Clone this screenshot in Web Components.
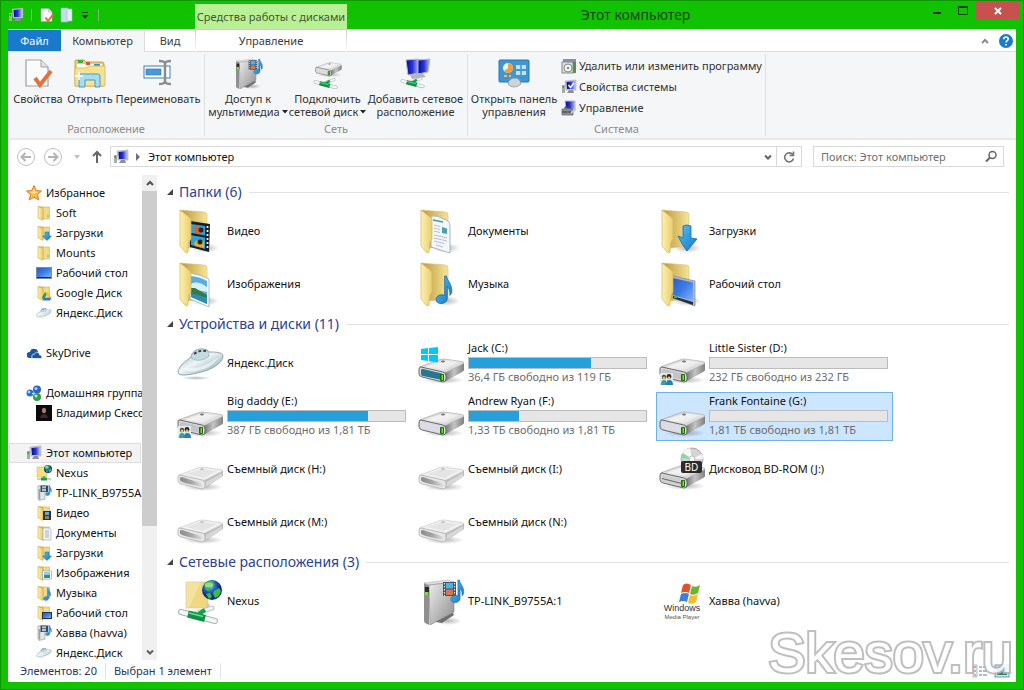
<!DOCTYPE html>
<html lang="ru">
<head>
<meta charset="utf-8">
<title>Этот компьютер</title>
<style>
  html, body { margin: 0; height: 100%; }
  body { font: 11px/16px "Noto Sans", "Open Sans", sans-serif; color: #111; background: #10c200; }
</style>
</head>
<body>
<explorer-window>
  <title-bar slot="title" context="Средства работы с дисками">Этот компьютер</title-bar>
  <ribbon-tabs slot="tabs"></ribbon-tabs>
  <ribbon-bar slot="ribbon">
    <ribbon-group label="Расположение">
      <ribbon-button icon="props" style="--w:54px">Свойства</ribbon-button>
      <ribbon-button icon="open" style="--w:50px">Открыть</ribbon-button>
      <ribbon-button icon="rename" style="--w:86px">Переименовать</ribbon-button>
    </ribbon-group>
    <ribbon-group label="Сеть">
      <ribbon-button icon="nas" style="--w:80px" menu>Доступ к<br>мультимедиа</ribbon-button>
      <ribbon-button icon="netdrive" style="--w:79px" menu>Подключить<br>сетевой диск</ribbon-button>
      <ribbon-button icon="netplace" style="--w:97px">Добавить сетевое<br>расположение</ribbon-button>
    </ribbon-group>
    <ribbon-group label="Система">
      <ribbon-button icon="panel" style="--w:86px">Открыть панель<br>управления</ribbon-button>
      <ribbon-list>
        <ribbon-item icon="uninstall">Удалить или изменить программу</ribbon-item>
        <ribbon-item icon="sysprops">Свойства системы</ribbon-item>
        <ribbon-item icon="manage">Управление</ribbon-item>
      </ribbon-list>
    </ribbon-group>
  </ribbon-bar>
  <address-bar slot="address">Этот компьютер</address-bar>
  <nav-pane slot="nav">
    <nav-item root icon="star">Избранное</nav-item>
    <nav-item icon="f16">Soft</nav-item>
    <nav-item icon="f16down">Загрузки</nav-item>
    <nav-item icon="f16">Mounts</nav-item>
    <nav-item icon="desk16">Рабочий стол</nav-item>
    <nav-item icon="f16drive">Google Диск</nav-item>
    <nav-item icon="ufo">Яндекс.Диск</nav-item>
    <nav-item root gap icon="cloud">SkyDrive</nav-item>
    <nav-item root gap icon="home16">Домашняя группа</nav-item>
    <nav-item icon="user16">Владимир Скесов</nav-item>
    <nav-item root gap selected icon="pc">Этот компьютер</nav-item>
    <nav-item icon="nexus16">Nexus</nav-item>
    <nav-item icon="nas16">TP-LINK_B9755A:1</nav-item>
    <nav-item icon="f16video">Видео</nav-item>
    <nav-item icon="f16doc">Документы</nav-item>
    <nav-item icon="f16down">Загрузки</nav-item>
    <nav-item icon="f16pic">Изображения</nav-item>
    <nav-item icon="f16music">Музыка</nav-item>
    <nav-item icon="f16desk">Рабочий стол</nav-item>
    <nav-item icon="nas16">Хавва (havva)</nav-item>
    <nav-item icon="ufo">Яндекс.Диск</nav-item>
  </nav-pane>
  <tile-group label="Папки (6)">
    <file-tile icon="video">Видео</file-tile>
    <file-tile icon="docs">Документы</file-tile>
    <file-tile icon="downloads">Загрузки</file-tile>
    <file-tile icon="pictures">Изображения</file-tile>
    <file-tile icon="music">Музыка</file-tile>
    <file-tile icon="desktop">Рабочий стол</file-tile>
  </tile-group>
  <tile-group label="Устройства и диски (11)">
    <file-tile icon="ufo">Яндекс.Диск</file-tile>
    <drive-tile icon="driveC" used="69" info="36,4 ГБ свободно из 119 ГБ">Jack (C:)</drive-tile>
    <drive-tile icon="driveShared" used="0" info="232 ГБ свободно из 232 ГБ">Little Sister (D:)</drive-tile>
    <drive-tile icon="driveShared" used="79" info="387 ГБ свободно из 1,81 ТБ">Big daddy (E:)</drive-tile>
    <drive-tile icon="drive" used="28" info="1,33 ТБ свободно из 1,81 ТБ">Andrew Ryan (F:)</drive-tile>
    <drive-tile icon="drive" used="0" selected info="1,81 ТБ свободно из 1,81 ТБ">Frank Fontaine (G:)</drive-tile>
    <file-tile icon="removable">Съемный диск (H:)</file-tile>
    <file-tile icon="removable">Съемный диск (I:)</file-tile>
    <file-tile icon="bd">Дисковод BD-ROM (J:)</file-tile>
    <file-tile icon="removable">Съемный диск (M:)</file-tile>
    <file-tile icon="removable">Съемный диск (N:)</file-tile>
  </tile-group>
  <tile-group label="Сетевые расположения (3)">
    <file-tile icon="nexus">Nexus</file-tile>
    <file-tile icon="nas">TP-LINK_B9755A:1</file-tile>
    <file-tile icon="wmp">Хавва (havva)</file-tile>
  </tile-group>
  <status-bar slot="status"></status-bar>
  <water-mark slot="mark">Skesov.ru</water-mark>
</explorer-window>

<script>
/* ---------- shared drawing parts ---------- */
const GRADS = `<defs>
<linearGradient id="gf" x1="0" x2="1"><stop offset="0" stop-color="#fdf0b0"/><stop offset="1" stop-color="#e9cd6c"/></linearGradient>
<linearGradient id="gb" x1="0" x2="1"><stop offset="0" stop-color="#b9964a"/><stop offset=".55" stop-color="#dcc06a"/><stop offset="1" stop-color="#f6e59c"/></linearGradient>
<linearGradient id="gblue" x1="0" x2="1" y2="1"><stop offset="0" stop-color="#5cc0f4"/><stop offset="1" stop-color="#0f78c4"/></linearGradient>
<linearGradient id="gscr" x1="0" x2="1" y2="1"><stop offset="0" stop-color="#2a5cc4"/><stop offset=".5" stop-color="#3f7ce6"/><stop offset="1" stop-color="#7fb4ff"/></linearGradient>
<linearGradient id="gnavy" x1="0" x2="1"><stop offset="0" stop-color="#0208a0"/><stop offset=".5" stop-color="#2a35d0"/><stop offset="1" stop-color="#b4c0fa"/></linearGradient>
<linearGradient id="gtop" x1="0" x2="1" y2="1"><stop offset="0" stop-color="#9c9c9c"/><stop offset=".4" stop-color="#ededed"/><stop offset="1" stop-color="#c6c6c6"/></linearGradient>
<linearGradient id="gside" x1="0" x2="1"><stop offset="0" stop-color="#6c6c6c"/><stop offset=".5" stop-color="#c4c4c4"/><stop offset="1" stop-color="#808080"/></linearGradient>
<linearGradient id="gbox" x1="0" x2="1" y2="1"><stop offset="0" stop-color="#ececec"/><stop offset=".5" stop-color="#bdbdbd"/><stop offset="1" stop-color="#8c8c8c"/></linearGradient>
<linearGradient id="gufo" x1="0" x2="1" y2="1"><stop offset="0" stop-color="#7f9ba3"/><stop offset=".45" stop-color="#eef6f8"/><stop offset="1" stop-color="#7c9ca6"/></linearGradient>
<linearGradient id="ghole" x1="0" x2="1"><stop offset="0" stop-color="#8c8c8c"/><stop offset=".5" stop-color="#a4a4a4"/><stop offset="1" stop-color="#e0e0e0"/></linearGradient>
<radialGradient id="gglobe" cx=".4" cy=".3"><stop offset="0" stop-color="#a8dcff"/><stop offset=".45" stop-color="#2d72d6"/><stop offset="1" stop-color="#0b2c86"/></radialGradient>
<radialGradient id="gsh"><stop offset="0" stop-color="#000" stop-opacity=".28"/><stop offset="1" stop-color="#000" stop-opacity="0"/></radialGradient></defs>`;

const back = '<ellipse cx="28" cy="41" rx="14" ry="5" fill="url(#gsh)"/><path d="M3 3L27 5Q30 5 30 8V39L10 41Z" fill="url(#gb)" stroke="#d8be70" stroke-width=".6"/>';
const flap = '<path d="M3 3L12 10Q14 11 14 13V32L12 35L11 45Q10 47 8 45L3 39Z" fill="url(#gf)" stroke="#d6b95e" stroke-width=".7"/>';
const folder = (inside, front = '') => back + inside + flap + front;
const note = (x, y, s) => `<g transform="translate(${x} ${y}) scale(${s})"><path d="M13 0C14 6 20 9 19 19L17 22C17 15 15 13 14 12V25C14 30 9 32 5 31C1 30 0 26 3 23C5 21 9 21 11 22V0Z" fill="url(#gblue)" stroke="#0f5d9c" stroke-width=".8"/></g>`;

const driveBody = (front, led) => `<ellipse cx="26" cy="41" rx="20" ry="4" fill="url(#gsh)"/>
<path d="M26 33L46 24V31Q46 32 44 33L28 42L26 43Z" fill="url(#gside)"/>
<path d="M2 28Q1 28 4 27L22 20.500Q24 20 26 20L44 22.500Q47 23 45 25L29 33Q27 34 25 34Z" fill="url(#gtop)" stroke="#a4a4a4" stroke-width=".6"/>
<path d="M8 27L24 21.500L40 23.500L26 31Z" fill="#fff" opacity=".35"/><ellipse cx="25" cy="22.500" rx="2" ry=".9" fill="#777"/>
<path d="M1 30Q1 28 3 28L25 33Q28 34 28 37V40Q28 43 25 43L4 38Q1 37 1 35Z" fill="#d8d8d8" stroke="#5c5c5c" stroke-width=".9"/>
<path d="M3 31Q3 30 5 30L24 34.500V41L5 37Q3 37 3 35Z" fill="${front}"/>
${led ? '<rect x="22" y="35" width="4" height="7" rx="1" fill="#1c6a0c"/><rect x="23.500" y="36" width="1.500" height="5" fill="#6be830"/>' : ''}`;
const lightDrive = `<ellipse cx="26" cy="42" rx="20" ry="4" fill="url(#gsh)"/>
<path d="M26 34L46 25V31L28 43L26 43Z" fill="#bcbcbc"/><path d="M28 42L45 32V28L29 37Z" fill="#d8d8d8"/>
<path d="M2 30L22 22.500Q24 22 26 22L43 24.500Q47 25 44 27L29 34.500Q27 36 25 35Z" fill="#f1f1f1" stroke="#cacaca" stroke-width=".7"/>
<path d="M9 29L24 24L40 26L26 33Z" fill="#e4e4e4"/><ellipse cx="25" cy="24" rx="2" ry=".8" fill="#b4b4b4"/>
<path d="M1 32Q1 30 3 30L25 35Q28 35 28 38V41Q28 44 25 44L4 39Q1 38 1 36Z" fill="#e6e6e6" stroke="#b2b2b2" stroke-width=".8"/>
<path d="M3 33Q3 32 5 32L25 38.500V42L12 39Q3 37 3 35Z" fill="url(#ghole)"/>`;
const people = '<rect x="1" y="34" width="13" height="12" fill="#d3eef3"/><path d="M2 46Q2 41 5 41Q8 41 8 46Z" fill="#3f9e90"/><path d="M7 46Q7 41 10 41Q14 41 14 46Z" fill="#2a7fb8"/><circle cx="5" cy="38" r="2.200" fill="#6c3c1c"/><circle cx="10" cy="37.500" r="2.400" fill="#3c2010"/><circle cx="5" cy="39" r="1.400" fill="#e8b690"/><circle cx="10" cy="39" r="1.400" fill="#e8b690"/>';
const globe = (x, y, r) => `<g transform="translate(${x} ${y}) scale(${r / 10})"><circle r="10" fill="url(#gglobe)"/><path d="M-8 -5Q-5 -10 1 -9L3 -5L-1 -3L-3 1L-6 0ZM2 1L7 -2L9 1L7 6L3 8L1 4ZM-6 4L-2 3L0 7L-3 9Z" fill="#3fbb3c"/><ellipse cx="-3" cy="-5" rx="4" ry="2.500" fill="#fff" opacity=".45"/></g>`;
const cable = '<path d="M14 38L35 31" stroke="#b8c0c0" stroke-width="5" stroke-linecap="round"/><path d="M14 38L35 31" stroke="#eef2f2" stroke-width="3" stroke-linecap="round"/><path d="M4 35L38 44" stroke="#a9b2b2" stroke-width="6" stroke-linecap="round"/><path d="M4 35L38 44" stroke="#f4f8f8" stroke-width="4" stroke-linecap="round"/><path d="M11 37L28 41.500" stroke="#12904a" stroke-width="7"/><path d="M20 38L28 33" stroke="#12a046" stroke-width="4"/><path d="M12 36L26 39.500" stroke="#5fe08a" stroke-width="1.500"/>';
const pcIcon = '<rect x="1" y="6" width="3" height="8" fill="#a9a9a9"/><rect x="1.500" y="7" width="1.500" height="2" fill="#2cae2c"/><path d="M4 2L15 1V11L5 11Z" fill="#c9cbd4" stroke="#9a9ca6" stroke-width=".5"/><path d="M5.500 3L14 2V10H6Z" fill="url(#gnavy)"/><path d="M8 11H12L13 14H6Z" fill="#8d8f98"/>';
const f16 = o => '<path d="M2 1.500L7 1.500L8 2H13V14H6Z" fill="url(#gb)"/><path d="M7 2H13.500V14H7Z" fill="#efd98a" stroke="#cdae5a" stroke-width=".6"/><path d="M2 1.500L6 3Q7 3.500 7 5V15.500L2 13Z" fill="url(#gf)" stroke="#cfae55" stroke-width=".6"/>' + o;

const ICONS = {
  video: [48, folder('<path d="M13 14L33 17L32 45L13 40Z" fill="#1c1c22"/><path d="M14 17L28 19V42L14 38Z" fill="#2f9fd4"/><path d="M14 27L28 29.500" stroke="#181820" stroke-width="2"/><path d="M17 20Q20 17 23 22L25 27L18 26Z" fill="#d8622c"/><circle cx="24" cy="23" r="2.500" fill="#3a2012"/><path d="M17 36Q20 31 22 35L27 34V41L18 39Z" fill="#e2ae2a"/><circle cx="23" cy="35" r="2.500" fill="#3a2012"/><path d="M30.500 19V43" stroke="#f2f2f2" stroke-width="1.800" stroke-dasharray="2 2"/>')],
  docs: [48, folder('<path d="M13 9Q20 8 26 12Q32 14 32 19V46L13 40Z" fill="#f3f6fb" stroke="#9aa4b4" stroke-width=".8"/><path d="M15 13L25 15" stroke="#4a9a96" stroke-width="1.500"/><path d="M16 18L22 19.500M16 21L22 22.500M16 24L22 25.500M16 28L29 31M16 31L29 34M16 34L26 36.500M18 38L25 40" stroke="#b2b9c6" stroke-width=".9"/><path d="M24 20L29 21.500V27L24 26Z" fill="#4b9fb8"/>')],
  downloads: [48, folder('<path d="M24 19Q28 17 32 19V31L38 32Q33 38 28 44Q23 38 19 29L24 31Z" fill="url(#gblue)" stroke="#0f6fb4" stroke-width=".8"/>')],
  pictures: [48, folder('<path d="M13 13Q24 15 32 19V47L13 39Z" fill="#fafcff" stroke="#9fb0ba" stroke-width=".8"/><path d="M14 16Q24 17 30 21V44L14 37Z" fill="#5aaede"/><path d="M14 24Q20 20 30 27V32L14 29Z" fill="#d6effa"/><path d="M14 28L18 28L30 35V38L14 34Z" fill="#357a48"/><path d="M14 33L30 38V44L14 37Z" fill="#2b8fae"/>')],
  music: [48, folder('', note(17, 16, .88))],
  desktop: [48, folder('<path d="M14 16L36 21V46L14 38Z" fill="#b4bcc6" stroke="#7a8490" stroke-width=".7"/><path d="M14 18L34 22.500V41L14 35Z" fill="url(#gscr)"/><path d="M14 36L34 42V45L14 38Z" fill="#22303c"/><rect x="15" y="36" width="3" height="2" fill="#4fae38"/>')],
  drive: [48, driveBody('#dcdce6', true)],
  driveC: [48, driveBody('#25788f', true) + '<path d="M3 10L10 9V15H3ZM11 9L20 8V15H11ZM3 16H10V22L3 21ZM11 16H20V23.500L11 22.300Z" fill="#00c8fa"/>'],
  driveShared: [48, driveBody('#c4c4c8', true) + people],
  removable: [48, lightDrive],
  bd: [48, driveBody('#cfcfcf', true) + '<path d="M3 33.500L23 38.500" stroke="#666" stroke-width="1"/><circle cx="33" cy="14" r="11" fill="#d4d4d4" stroke="#9a9a9a" stroke-width=".8"/><path d="M33 14L23 9A11 11 0 0 1 31 3Z" fill="#f7f7f7"/><path d="M33 14L22 13A11 11 0 0 1 24 8Z" fill="#84dca0"/><path d="M33 14L43 9A11 11 0 0 1 44 14Z" fill="#f6f6f6"/><circle cx="33" cy="14" r="3" fill="#fff" stroke="#aaa" stroke-width=".7"/><rect x="22" y="16" width="21" height="12" rx="2" fill="#2b2b2b"/><text x="32.500" y="26" font-size="10" fill="#fff" text-anchor="middle" font-family="Noto Sans">BD</text>'],
  ufo: [48, '<ellipse cx="19" cy="39" rx="15" ry="2" fill="url(#gsh)"/><path d="M1 33C2 26 10 21 14 18C15 13 19 10 25 10C29 10 31 11 32 13C38 13 46 13 46 17C46 24 34 31 24 33C13 36 1 38 1 33Z" fill="url(#gufo)" stroke="#7a969e" stroke-width=".8"/><path d="M14 18C15 13 19 10 25 10C30 10 32 13 32 17C27 22 17 23 14 18Z" fill="#c3dbe0" stroke="#86a2aa" stroke-width=".6"/><path d="M17 15Q22 11 29 12" stroke="#333e44" stroke-width="1.800" stroke-dasharray="3 2" fill="none"/><path d="M7 29Q24 32 42 18Q34 30 19 32Q9 33 7 29Z" fill="#fff" opacity=".6"/>'],
  nexus: [48, '<path d="M9 5H31V31H9Z" fill="#f0d880" stroke="#dcc476" stroke-width=".6"/><path d="M9 5H24L12 31H9Z" fill="#fff" opacity=".25"/><path d="M31 27V34" stroke="#c8c8c8" stroke-width="3"/>' + globe(35, 13, 10) + cable],
  nexus16: [16, '<path d="M1 2H11V12H1Z" fill="#f4df80" stroke="#d8bc5c" stroke-width=".6"/><path d="M8 11V14" stroke="#3cb46a" stroke-width="1.500"/>' + globe(12, 4, 4) + '<path d="M1 14H15" stroke="#c8d0d0" stroke-width="2"/><path d="M5 14H11" stroke="#1c9e50" stroke-width="3"/>'],
  nas: [48, '<ellipse cx="30" cy="44" rx="14" ry="4" fill="url(#gsh)"/><path d="M12 44L24 46L36 38L34 34Z" fill="#6e6e6e"/><path d="M6 6L11 8V48L7 46Q6 45 6 43Z" fill="#8f8f8f"/><path d="M6 6L30 3L36 5L11 8Z" fill="#e0e0e0" stroke="#aaa" stroke-width=".5"/><path d="M11 8L36 5V35L12 48Z" fill="url(#gbox)" stroke="#8c8c8c" stroke-width=".7"/><rect x="7" y="10" width="4" height="8" fill="#2a2a2a"/><rect x="7" y="15" width="3.500" height="3" fill="#7ce03a"/><rect x="25" y="5" width="13" height="14" fill="#36566c"/><rect x="28" y="6" width="7" height="5.500" fill="#58aee0"/><rect x="28" y="12.500" width="7" height="5.500" fill="#d8744a"/><path d="M26.500 6V19M36.500 6V19" stroke="#e6e6e6" stroke-width="1.200" stroke-dasharray="1.500 1.500"/>' + note(32, 3, .72)],
  nas16: [16, '<path d="M2 1L9 .500V14L3 15.500L2 14Z" fill="#e3e5e7" stroke="#9a9ea2" stroke-width=".7"/><path d="M3.500 4V14.500" stroke="#9a9ea2" stroke-width="1.500"/><rect x="4.500" y=".500" width="7.500" height="6.500" fill="#3c4850"/><rect x="6" y="1.200" width="4" height="2.200" fill="#9cc8e0"/><rect x="6" y="4" width="4" height="2.200" fill="#b8c4c8"/>' + note(9, 0, .34)],
  wmp: [48, '<path d="M24 8Q27 5 32 8L30 16Q26 14 22 16Z" fill="#e2532a"/><path d="M33 9Q37 11 41 8L39 16Q35 19 31 17Z" fill="#6fb52c"/><path d="M22 17Q26 15 30 17L28 25Q24 23 20 25Z" fill="#3a80d8"/><path d="M31 18Q35 20 39 17L37 25Q33 28 29 26Z" fill="#f7bd22"/><text x="23" y="34" font-size="9" text-anchor="middle" fill="#333" font-family="Liberation Sans">Windows</text><text x="23" y="42" font-size="6" text-anchor="middle" fill="#555" font-family="Liberation Sans">Media Player</text>'],
  props: [32, '<path d="M4 3H19L26 10V29H4Z" fill="#fbfbfc" stroke="#9da1a8" stroke-width="1.200"/><path d="M19 3V10H26" fill="#e2e4e8" stroke="#9da1a8"/><path d="M13 21L18 28L29 14" fill="none" stroke="#e4703c" stroke-width="4"/>'],
  open: [32, '<path d="M1 4Q1 3 2 3H10L12 5H28Q30 5 30 7V29H1Z" fill="#e8cd72" stroke="#c8a64c"/><path d="M3 7H28V12H3Z" fill="#fffdf4"/><rect x="4" y="3" width="5" height="3" fill="#3fae3c"/><rect x="12" y="5" width="4" height="3" fill="#d85038"/><rect x="20" y="7" width="6" height="2" fill="#3f8fd8"/><path d="M1 11H13L15 9H31V29H1Z" fill="#f7e193" stroke="#d6b75c" stroke-width=".8"/><path d="M5 30V19Q5 17 7 17H24Q26 17 26 19V30H21V23H11V30Z" fill="#a8dcf0" stroke="#4c9cc0"/><path d="M5 15V23M1 19H9" stroke="#fff" stroke-width="1.500"/>'],
  rename: [32, '<rect x="2" y="9" width="26" height="12" fill="#fff" stroke="#3a7fb8"/><rect x="4" y="12" width="15" height="6" fill="#4a9ad8" stroke="#2a6fa8" stroke-width=".6"/><path d="M17 4Q22 4 23 6Q24 4 29 4M17 27Q22 27 23 25Q24 27 29 27M23 6V25" fill="none" stroke="#8a8c90" stroke-width="2.500"/>'],
  netdrive: [32, '<g transform="translate(3 -6) scale(.58)">' + driveBody('#dcdcdc', true) + '</g><g transform="translate(1 4) scale(.6)">' + cable + '</g>'],
  netplace: [32, '<path d="M6 3L19 2V16L8 18Z" fill="url(#gnavy)" stroke="#b5b9c8"/><path d="M18 3L30 2L28 15L18 17Z" fill="url(#gnavy)" stroke="#b5b9c8"/><path d="M10 18L22 16L26 20L12 22Z" fill="#b2b5bd"/><g transform="translate(0 3) scale(.6)">' + cable + '</g>'],
  panel: [32, '<rect x="1" y="3" width="30" height="22" rx="1" fill="#3f96d0" stroke="#2478b4"/><circle cx="10" cy="11" r="5" fill="#e9f4fb"/><path d="M10 11V6A5 5 0 1 1 6 14Z" fill="#f0a040"/><rect x="18" y="8" width="10" height="4" fill="#bfe2f6"/><rect x="18" y="14" width="10" height="4" fill="#bfe2f6"/><path d="M23 8V12M23 14V18" stroke="#3f96d0" stroke-width="1.500"/><path d="M6 19H9M11 19H13" stroke="#f0b860" stroke-width="2"/><path d="M10 27Q11 21 17 21Q22 21 23 27Q20 30 16 30Q12 30 10 27Z" fill="#cfd2d6" stroke="#8f949a" stroke-width=".8"/>'],
  uninstall: [16, '<path d="M2 1H15V6H2Z" fill="#8b90a8"/><rect x="1" y="4" width="11" height="11" fill="#d9dde0" stroke="#868c90"/><path d="M12 4H15V15H12Z" fill="#5c8c4a"/><circle cx="7" cy="10" r="4" fill="#f4f4f4" stroke="#8a8a8a"/><circle cx="7" cy="10" r="1.300" fill="#7a9c62"/>'],
  sysprops: [16, pcIcon + '<path d="M7.500 6L9.500 8.500L13 4" fill="none" stroke="#fff" stroke-width="1.500"/>'],
  manage: [16, '<path d="M4 1L14 1V9L5 9Z" fill="url(#gnavy)" stroke="#b4b8c8"/><path d="M1 9H12V15H1Z" fill="#8c939a" stroke="#59616a" stroke-width=".7"/><path d="M4 9V7H9V9M1 12H12M4 11V13M9 11V13" stroke="#3c444c" fill="none"/><path d="M10 13L15 9" stroke="#c6c9cc" stroke-width="2"/>'],
  pc: [16, pcIcon],
  star: [16, '<path d="M8 .5L10.200 5.500L15.500 6L11.500 9.700L12.800 15L8 12.200L3.200 15L4.500 9.700L.5 6L5.800 5.500Z" fill="#fbb84a" stroke="#dd7e26"/><path d="M8 3L9 6.500L12 7L8 9L4 7L7 6.500Z" fill="#ffe2a0"/>'],
  f16: [16, f16('<path d="M12 10V12" stroke="#58b0c8"/>')],
  f16down: [16, f16('<path d="M9 7H13V11H15.500L11 15.500L6.500 11H9Z" fill="url(#gblue)" stroke="#156fae" stroke-width=".5"/>')],
  f16drive: [16, f16('<path d="M9 7H12L15.500 13H12.500Z" fill="#f7c52c"/><path d="M9 7L10.500 9.700L7.500 15L6 12.500Z" fill="#1b9e5a"/><path d="M8.500 12.700H15.500L14 15.500H7Z" fill="#3470d8"/>')],
  f16video: [16, f16('<rect x="7" y="6" width="8" height="9" fill="#2c343c"/><rect x="9" y="7" width="4" height="3" fill="#5eaedc"/><rect x="9" y="11" width="4" height="3" fill="#b07850"/>')],
  f16doc: [16, f16('<path d="M7 3H13L15 5V15H7Z" fill="#f2f6fb" stroke="#97a2b2" stroke-width=".6"/><path d="M9 6H13M9 8H13M9 10H13M9 12H13" stroke="#8da0b8" stroke-width=".8"/>')],
  f16pic: [16, f16('<rect x="6.500" y="6" width="9" height="8" fill="#fff" stroke="#8a98a4" stroke-width=".6"/><rect x="8" y="7" width="6" height="3" fill="#8ccbec"/><rect x="8" y="10" width="6" height="3" fill="#3f8c66"/>')],
  f16music: [16, f16(note(7, 3, .4))],
  f16desk: [16, f16('<rect x="6" y="7" width="10" height="7" fill="#22324a"/><rect x="7" y="8" width="8" height="5" fill="url(#gscr)"/>')],
  desk16: [16, '<rect x="0" y="2" width="16" height="12" fill="#7d8ca0"/><rect x="1" y="3" width="14" height="9" fill="url(#gscr)"/><rect x="1" y="12" width="14" height="1" fill="#1c2c44"/>'],
  cloud: [16, '<path d="M1 11Q0 7 4 7Q5 3 9 4Q12 4 12 8L8 9L7 13H3Q1 13 1 11Z" fill="#1a56a8"/><path d="M6 13Q5 9 8.500 9Q10 6 13 8Q14 9 13.500 10Q16 10 16 12Q16 13 15 13.500H8Q6 13.500 6 13Z" fill="#1a56a8" stroke="#fff" stroke-width=".7"/>'],
  home16: [16, '<circle cx="4" cy="8" r="3.500" fill="#2d6fd0"/><circle cx="11" cy="4.500" r="4" fill="#2f62c8"/><circle cx="11" cy="12" r="4" fill="#2f9c48"/><circle cx="10" cy="3.500" r="1.500" fill="#a8d4fa"/><circle cx="10" cy="11" r="1.500" fill="#b2ecb4"/><circle cx="3" cy="7" r="1.300" fill="#b0e4f8"/><path d="M6 8L8 10" stroke="#fff"/>'],
  user16: [16, '<rect width="16" height="16" fill="#0c0a0c"/><ellipse cx="8" cy="5.500" rx="2" ry="2.800" fill="#a57c66"/><path d="M4 13Q5 9 8 9Q11 9 12 13Z" fill="#3a2c2c"/>'],
  newfolder: [16, '<path d="M2 1H9V15H2Z" fill="#c6dcf0" stroke="#94b4d0" stroke-width=".6"/><path d="M8 2H13V14H8Z" fill="#e8f1fa" stroke="#9cbcd6" stroke-width=".6"/>'],
  details: [16, '<path d="M1 2H5V14H1Z" fill="#eef2f8" stroke="#8aa0bc" stroke-width=".7"/><path d="M2 4H4M2 8H4M2 12H4" stroke="#d05848"/><path d="M7 4H10M11 4H15M7 8H10M11 8H15M7 12H10M11 12H15" stroke="#56789c"/>'],
  tiles: [16, '<rect x="1" y="2" width="14" height="12" fill="#cfe3f4" stroke="#7096b8"/><rect x="3" y="4" width="10" height="8" fill="#5aa6d8"/><path d="M3 12V9L7 8L13 11V12Z" fill="#2f7c62"/>'],
  back: [20, '<circle cx="10" cy="10" r="8.500" fill="none" stroke="#bfbfbf"/><path d="M15 10H6M9.500 6L5.500 10L9.500 14" fill="none" stroke="#b4b4b4" stroke-width="2"/>'],
  forward: [20, '<circle cx="10" cy="10" r="8.500" fill="none" stroke="#bfbfbf"/><path d="M5 10H14M10.500 6L14.500 10L10.500 14" fill="none" stroke="#b4b4b4" stroke-width="2"/>'],
  up: [16, '<path d="M8 14V3M4 7L8 3L12 7" fill="none" stroke="#666" stroke-width="2"/>'],
  refresh: [16, '<path d="M12 6A4.500 4.500 0 1 0 12.500 9.500M12.500 2.500V6.500H8.500" fill="none" stroke="#757575" stroke-width="1.600"/>'],
  search: [16, '<circle cx="9.500" cy="6" r="3.500" fill="none" stroke="#666" stroke-width="1.500"/><path d="M7 8.500L3 12.500" stroke="#666" stroke-width="2"/>'],
  chevUp: [12, '<path d="M3 8L6 5L9 8" fill="none" stroke="#8a8a8a" stroke-width="2"/>'],
  scrUp: [12, '<path d="M3 8L6 5L9 8" fill="none" stroke="#505050" stroke-width="2"/>'],
  chevDown: [12, '<path d="M3 4.500L6 7.500L9 4.500" fill="none" stroke="#606060" stroke-width="2"/>'],
  triRight: [8, '<path d="M2 0L6 4L2 8Z" fill="#707070"/>'],
  triDown: [8, '<path d="M1 2H7L4 6Z" fill="#c0c0c0"/>'],
  caret: [6, '<path d="M0 1H6L3 4.500Z" fill="#222"/>'],
  qat: [12, '<path d="M3 3.500H9" stroke="#143c10"/><path d="M2.500 6H9.500L6 9.500Z" fill="#0c2c08"/>'],
  corner: [8, '<path d="M7 1V7H1Z" fill="#444"/>'],
  help: [16, '<circle cx="8" cy="8" r="7" fill="#1a7ad0"/><path d="M5.800 6.200Q5.800 4 8 4Q10.200 4 10.200 6Q10.200 7 9 7.800Q8 8.500 8 9.500M8 11V12.600" fill="none" stroke="#fff" stroke-width="1.600"/>'],
  min: [12, '<rect x="2" y="7" width="8" height="2" fill="#1c2c18"/>'],
  max: [12, '<path d="M1.500 1.500H10.500V9.500H1.500Z" fill="none" stroke="#1c3c14"/><path d="M1 2H11" stroke="#1c3c14" stroke-width="2"/>'],
  close: [12, '<path d="M3 3L9 9M9 3L3 9" stroke="#fff" stroke-width="2"/>']
};

/* Registers an element whose shadow root is filled by a render function. */
function define(name, css, render) {
  customElements.define(name, class extends HTMLElement {
    connectedCallback() {
      if (this.shadowRoot) return;
      const t = document.createElement('template');
      t.innerHTML = `<style>:host,*{box-sizing:border-box}button{font:inherit;color:inherit;background:none;border:0;padding:0;margin:0}${css}</style>${render(this)}`;
      this.attachShadow({ mode: 'open' }).append(t.content.cloneNode(true));
    }
  });
}
const attr = (el, n) => el.getAttribute(n) || '';

define('ui-icon', `:host{display:block;flex:none;width:var(--s,16px);height:var(--s,16px)}svg{display:block;width:100%;height:100%}`,
  el => { const [n, body] = ICONS[attr(el, 'name')]; return `<svg viewBox="0 0 ${n} ${n}" aria-hidden="true">${GRADS}${body}</svg>`; });

define('explorer-window', `
:host{display:flex;flex-direction:column;height:100vh;position:relative;background:#10c200;border:1px solid #0f9604;padding:0 7px 7px}
main{flex:1;min-height:0;display:flex;background:#fff}
section{flex:1;min-width:0;overflow:hidden;padding:5px 7px 0 9px}
slot[name=mark]::slotted(*){position:absolute;right:10px;bottom:8px}`,
  () => `<slot name="title"></slot><slot name="tabs"></slot><slot name="ribbon"></slot><slot name="address"></slot>
  <main><slot name="nav"></slot><section><slot></slot></section></main><slot name="status"></slot><slot name="mark"></slot>`);

define('title-bar', `
:host{display:flex;height:28px;flex:none}
.quick{width:187px;flex:none;display:flex;align-items:center;gap:4px}
.quick i{width:1px;height:12px;background:#78b870;margin:0 3px}
.ctx{width:152px;flex:none;margin-top:3px;background:#baf095;color:#3c5a30;display:flex;align-items:center;justify-content:center;white-space:nowrap;font-size:11px}
h1{flex:1;margin:0;font-weight:400;font-size:14px;line-height:28px;text-align:center;color:#1c4414}
.win{display:flex;align-items:flex-start;margin-right:-4px}
.win button{width:26px;height:19px;display:flex;align-items:center;justify-content:center}
.win .x{width:44px;background:#c75050}
ui-icon{--s:16px}.win ui-icon,.q{--s:12px}`,
  el => `<div class="quick"><ui-icon name="pc"></ui-icon><i></i><ui-icon name="props"></ui-icon><ui-icon name="newfolder"></ui-icon><ui-icon class="q" name="qat"></ui-icon><i></i></div>
  <div class="ctx">${attr(el, 'context')}</div><h1><slot></slot></h1>
  <div class="win"><button aria-label="Свернуть"><ui-icon name="min"></ui-icon></button><button aria-label="Развернуть"><ui-icon name="max"></ui-icon></button><button class="x" aria-label="Закрыть"><ui-icon name="close"></ui-icon></button></div>`);

define('ribbon-tabs', `
:host{display:flex;height:23px;flex:none;background:#fff;color:#3c3c3c;border-bottom:1px solid #dcdde0;border-top:1px solid #a8e8a0}
button{height:22px;text-align:center;white-space:nowrap}
.file{width:53px;background:#1979ca;color:#fff;height:21px}.on{width:84px;background:#f5f6f7;border-right:1px solid #dcdde0}
.view{width:50px}.ctx{width:152px;border:solid transparent;border-width:0 1px;border-image:linear-gradient(#ccc,#fff) 1}
.end{margin-left:auto;display:flex;align-items:center;gap:7px;padding-right:2px}.c{--s:12px}`,
  () => `<button class="file">Файл</button><button class="on">Компьютер</button><button class="view">Вид</button><button class="ctx">Управление</button>
  <div class="end"><ui-icon class="c" name="chevUp"></ui-icon><ui-icon name="help"></ui-icon></div>`);

define('ribbon-bar', `:host{display:flex;height:88px;flex:none;background:#f5f6f7;border-bottom:2px solid #e6e7e8;padding:2px 0}`, () => `<slot></slot>`);
define('ribbon-group', `
:host{display:flex;flex-direction:column;padding:3px 3px 0;border-right:1px solid #e0e1e3}
div{display:flex;flex:1}footer{text-align:center;color:#8c8c8c;line-height:15px}`,
  el => `<div><slot></slot></div><footer>${attr(el, 'label')}</footer>`);
define('ribbon-button', `
:host{display:block;width:var(--w)}
button{width:100%;display:flex;flex-direction:column;align-items:center;line-height:13px;white-space:nowrap;color:#333}
ui-icon{--s:32px;margin-bottom:3px}span ui-icon{display:inline-block;--s:6px;margin:0 0 1px 2px}`,
  el => `<button><ui-icon name="${attr(el, 'icon')}"></ui-icon><span><slot></slot>${el.hasAttribute('menu') ? '<ui-icon name="caret"></ui-icon>' : ''}</span></button>`);
define('ribbon-list', `:host{display:flex;flex-direction:column;gap:5px;padding:1px 0 0 4px}`, () => `<slot></slot>`);
define('ribbon-item', `:host{display:block}button{display:flex;gap:2px;height:16px;line-height:16px;white-space:nowrap;color:#333}`,
  el => `<button><ui-icon name="${attr(el, 'icon')}"></ui-icon><slot></slot></button>`);

define('address-bar', `
:host{display:flex;align-items:center;height:35px;flex:none;background:#fff;padding:0 12px 2px 8px}
.nav{display:flex;align-items:center;width:94px;flex:none}.nav button+button{margin-left:7px}
.n{--s:20px}.t{--s:8px}.nav .h{margin-left:10px}.nav .u{margin-left:8px}
.box{flex:1;display:flex;align-items:center;height:21px;border:1px solid #d9d9d9;padding-left:2px}
.box span{flex:1;padding-left:6px}.box .t{margin-left:5px}.box .d{--s:12px;margin-right:2px}
.box .r{border-left:1px solid #d9d9d9;height:19px;width:25px;display:flex;align-items:center;justify-content:center}
label{width:191px;flex:none;margin-left:11px;display:flex;align-items:center;height:21px;border:1px solid #d9d9d9;padding:0 4px 0 7px}
input{flex:1;min-width:0;font:inherit;border:0;outline:0;padding:0;background:none}input::placeholder{color:#707070;opacity:1}`,
  () => `<div class="nav"><button aria-label="Назад"><ui-icon class="n" name="back"></ui-icon></button><button aria-label="Вперед"><ui-icon class="n" name="forward"></ui-icon></button><button class="h" aria-label="Журнал"><ui-icon class="t" name="triDown"></ui-icon></button><button class="u" aria-label="Вверх"><ui-icon name="up"></ui-icon></button></div>
  <div class="box"><ui-icon name="pc"></ui-icon><ui-icon class="t" name="triRight"></ui-icon><span><slot></slot></span><ui-icon class="d" name="chevDown"></ui-icon><button class="r" aria-label="Обновить"><ui-icon name="refresh"></ui-icon></button></div>
  <label><input type="text" placeholder="Поиск: Этот компьютер" aria-label="Поиск"><ui-icon name="search"></ui-icon></label>`);

define('nav-pane', `
:host{display:flex;width:149px;flex:none;overflow:hidden}
nav{flex:1;min-width:0;padding:8px 0 0 1px;overflow:hidden}
.bar{width:15px;flex:none;background:#f0f0f0;display:flex;flex-direction:column}
.bar button{height:16px;display:flex;align-items:center;justify-content:center}.bar ui-icon{--s:12px}
.track{flex:1}.thumb{height:74%;background:#cdcdcd}`,
  () => `<nav><slot></slot></nav><div class="bar"><button aria-label="Вверх"><ui-icon name="scrUp"></ui-icon></button><div class="track"><div class="thumb"></div></div><button aria-label="Вниз"><ui-icon name="chevDown"></ui-icon></button></div>`);
define('nav-item', `
:host{display:block}:host([gap]){margin-top:20px}
a{display:flex;align-items:center;gap:4px;height:20px;padding-left:27px;white-space:nowrap;color:inherit;text-decoration:none;overflow:hidden}
:host([root]) a{padding-left:17px}
:host([selected]) a{background:#f3f3f3;border:1px solid #dedede;padding-left:16px;margin-right:1px}`,
  el => `<a href="#"><ui-icon name="${attr(el, 'icon')}"></ui-icon><slot></slot></a>`);

define('tile-group', `
:host{display:block;margin-bottom:3px}
h2{display:flex;align-items:center;height:24px;margin:0 0 3px;font-weight:400;font-size:14px;color:#2c3f94;white-space:nowrap}
h2::after{content:"";flex:1;height:1px;background:#e2e2e2;margin-left:7px}
ui-icon{--s:8px;margin-right:5px}
div{display:grid;grid-template-columns:repeat(auto-fill,237px);gap:4px;padding-left:8px}`,
  el => `<h2><ui-icon name="corner"></ui-icon>${attr(el, 'label')}</h2><div><slot></slot></div>`);
const tileCss = `:host{display:block;height:49px}
button{width:100%;height:100%;display:flex;align-items:center;gap:2px;text-align:left;border:1px solid transparent;padding:0 4px 2px 2px}
:host([selected]) button{background:#cce6ff;border-color:#6fb1e8}
ui-icon{--s:48px}`;
define('file-tile', tileCss, el => `<button><ui-icon name="${attr(el, 'icon')}"></ui-icon><slot></slot></button>`);
define('drive-tile', tileCss + `
.txt{flex:1;display:flex;flex-direction:column;line-height:15px;padding-bottom:2px}
.bar{height:12px;border:1px solid #bcbcbc;background:#e6e6e6;margin-top:2px}
.bar div{height:100%;background:#26a0da}small{font-size:11px;color:#6d6d6d}`,
  el => `<button><ui-icon name="${attr(el, 'icon')}"></ui-icon><span class="txt"><slot></slot><div class="bar"><div style="width:${attr(el, 'used')}%"></div></div><small>${attr(el, 'info')}</small></span></button>`);

define('status-bar', `
:host{display:flex;align-items:center;height:22px;flex:none;background:#fff;color:#1e395b;padding:0 6px 0 12px}
span{padding-right:8px;border-right:1px solid #e4e4e4;margin-right:8px}
div{margin-left:auto;display:flex;gap:6px}`,
  () => `<span>Элементов: 20</span><span>Выбран 1 элемент</span><div><ui-icon name="details"></ui-icon><ui-icon name="tiles"></ui-icon></div>`);

define('water-mark', `:host{display:block;pointer-events:none;font:56px/56px "Liberation Sans",sans-serif;color:#fff;-webkit-text-stroke:4px #b4b4b4;paint-order:stroke fill;opacity:.85}`, () => `<slot></slot>`);
</script>
</body>
</html>
